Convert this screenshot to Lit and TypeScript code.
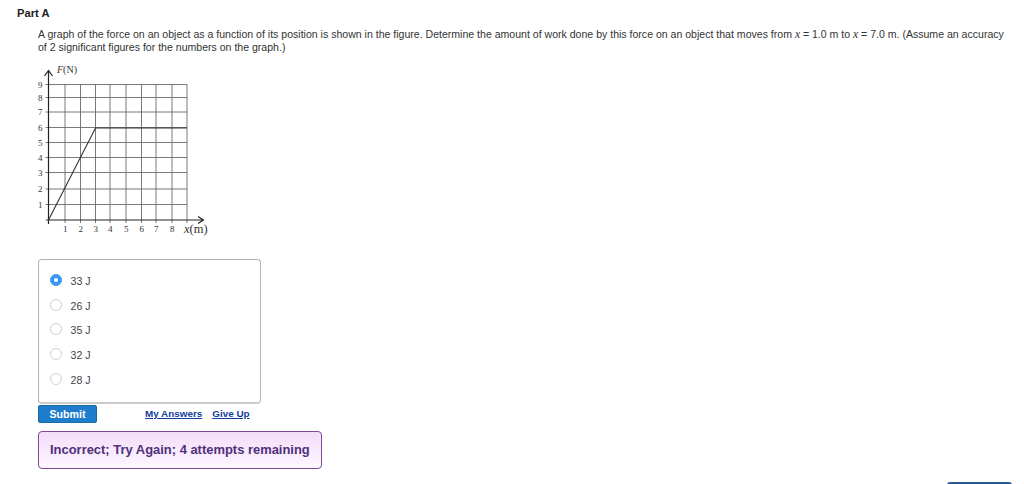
import { LitElement, html, css, svg } from "lit";
import { customElement } from "lit/decorators.js";

const XS = [48.5, 65, 80.5, 95.5, 110, 126, 141.5, 156, 172, 187];
const YS = [220, 204.5, 189, 172.5, 157.5, 142.5, 127.5, 112, 97.5, 84.5];
const OPTIONS = ["33 J", "26 J", "35 J", "32 J", "28 J"];

@customElement("app-root")
export class AppRoot extends LitElement {
  static styles = css`
    :host {
      display: block;
      width: 1024px;
      height: 484px;
      overflow: hidden;
      background: #fff;
      font-family: "Liberation Sans", Arial, sans-serif;
      color: #333;
    }
    .page { display: flex; flex-direction: column; padding: 6px 12px 0 17px; }
    .part { font-size: 11.2px; font-weight: 700; line-height: 14px; color: #222; }
    .body { margin: 8px 0 0 21px; display: flex; flex-direction: column; align-items: flex-start; }
    .q { font-size: 10.55px; line-height: 13px; color: #333; width: 970px; white-space: nowrap; }
    .q i { font-family: "Liberation Serif", serif; font-size: 11.5px; }
    .graph { display: block; margin: 6px 0 0 -8px; width: 190px; height: 180px; }
    .graph text { font-family: "Liberation Serif", serif; fill: #333; }
    .card {
      box-sizing: border-box; width: 223px; height: 145px; margin-top: 18.5px;
      border: 1px solid #b4b4b4; border-bottom: 2px solid #ccc; border-radius: 4px;
      padding: 9px 0 0 11px; display: flex; flex-direction: column;
    }
    .opt { display: flex; align-items: center; height: 24.7px; font-size: 10.6px; color: #444; }
    .radio {
      box-sizing: border-box; width: 12px; height: 12px; border-radius: 50%;
      border: 1px solid #d0d0d0; margin-right: 8.5px; background: #fff; flex: none;
      display: flex; align-items: center; justify-content: center; position: relative; top: -1px;
    }
    .radio.on { background: #3d97f2; border-color: #3d97f2; }
    .radio.on::after { content: ""; width: 4px; height: 4px; border-radius: 50%; background: #fff; }
    .actions { display: flex; align-items: center; margin-top: 1px; }
    .submit {
      box-sizing: border-box; width: 59px; height: 18px; border: 1px solid #1a6aa8; border-radius: 2px;
      background: #1d7dcb; color: #fff; font: 700 10.6px "Liberation Sans", Arial, sans-serif;
      padding: 0; display: flex; align-items: center; justify-content: center;
    }
    .link { font-size: 9.9px; font-weight: 700; color: #13409c; text-decoration: underline; }
    .l1 { margin-left: 48px; }
    .l2 { margin-left: 10px; }
    .feedback {
      box-sizing: border-box; width: 284px; height: 38px; margin-top: 8px; padding-left: 11px;
      border: 1px solid #7e4a97; border-radius: 4px;
      background: linear-gradient(#f3ddfa, #fdf6ff);
      color: #50307a; font-size: 12.95px; font-weight: 700; display: flex; align-items: center; white-space: nowrap;
    }
    .peek { align-self: flex-end; width: 65px; height: 3px; margin-top: 13.5px; background: #2a5a94; border-radius: 3px 3px 0 0; }
  `;

  private graph() {
    const top = YS[9], bot = YS[0], l = XS[0], r = XS[9];
    return html`<svg class="graph" viewBox="30 60 190 180" aria-label="Force versus position graph">
      ${XS.slice(1).map((x) => svg`<line x1=${x} x2=${x} y1=${top} y2=${bot + 3} stroke="#6a6a6a" stroke-width="0.9"/>`)}
      ${YS.slice(1).map((y) => svg`<line x1=${l - 3} x2=${r} y1=${y} y2=${y} stroke="#6a6a6a" stroke-width="0.9"/>`)}
      <path d="M48.5 224V71M44.5 76L48.5 70.5L52.5 76" fill="none" stroke="#222" stroke-width="1.2"/>
      <path d="M46 220H202M198 216.5L203.5 220L198 223.5" fill="none" stroke="#222" stroke-width="1.2"/>
      <path d="M48.5 220L95.5 128H187" fill="none" stroke="#333" stroke-width="1.1"/>
      ${YS.slice(1).map((y, i) => svg`<text x="38" y=${y + 3} font-size="9">${i + 1}</text>`)}
      ${XS.slice(1, 9).map((x, i) => svg`<text x=${x - 2} y="232" font-size="9">${i + 1}</text>`)}
      <text x="57" y="73" font-size="10"><tspan font-style="italic">F</tspan>(N)</text>
      <text x="184" y="233" font-size="12.5"><tspan font-style="italic">x</tspan>(m)</text>
    </svg>`;
  }

  render() {
    return html`<div class="page">
      <div class="part">Part A</div>
      <div class="body">
        <div class="q">A graph of the force on an object as a function of its position is shown in the figure. Determine the amount of work done by this force on an object that moves from <i>x</i> = 1.0 m to <i>x</i> = 7.0 m. (Assume an accuracy<br />of 2 significant figures for the numbers on the graph.)</div>
        ${this.graph()}
        <div class="card">
          ${OPTIONS.map((o, i) => html`<div class="opt"><span class="radio ${i === 0 ? "on" : ""}"></span>${o}</div>`)}
        </div>
        <div class="actions">
          <button class="submit">Submit</button>
          <a class="link l1">My Answers</a>
          <a class="link l2">Give Up</a>
        </div>
        <div class="feedback">Incorrect; Try Again; 4 attempts remaining</div>
      </div>
      <div class="peek"></div>
    </div>`;
  }
}
